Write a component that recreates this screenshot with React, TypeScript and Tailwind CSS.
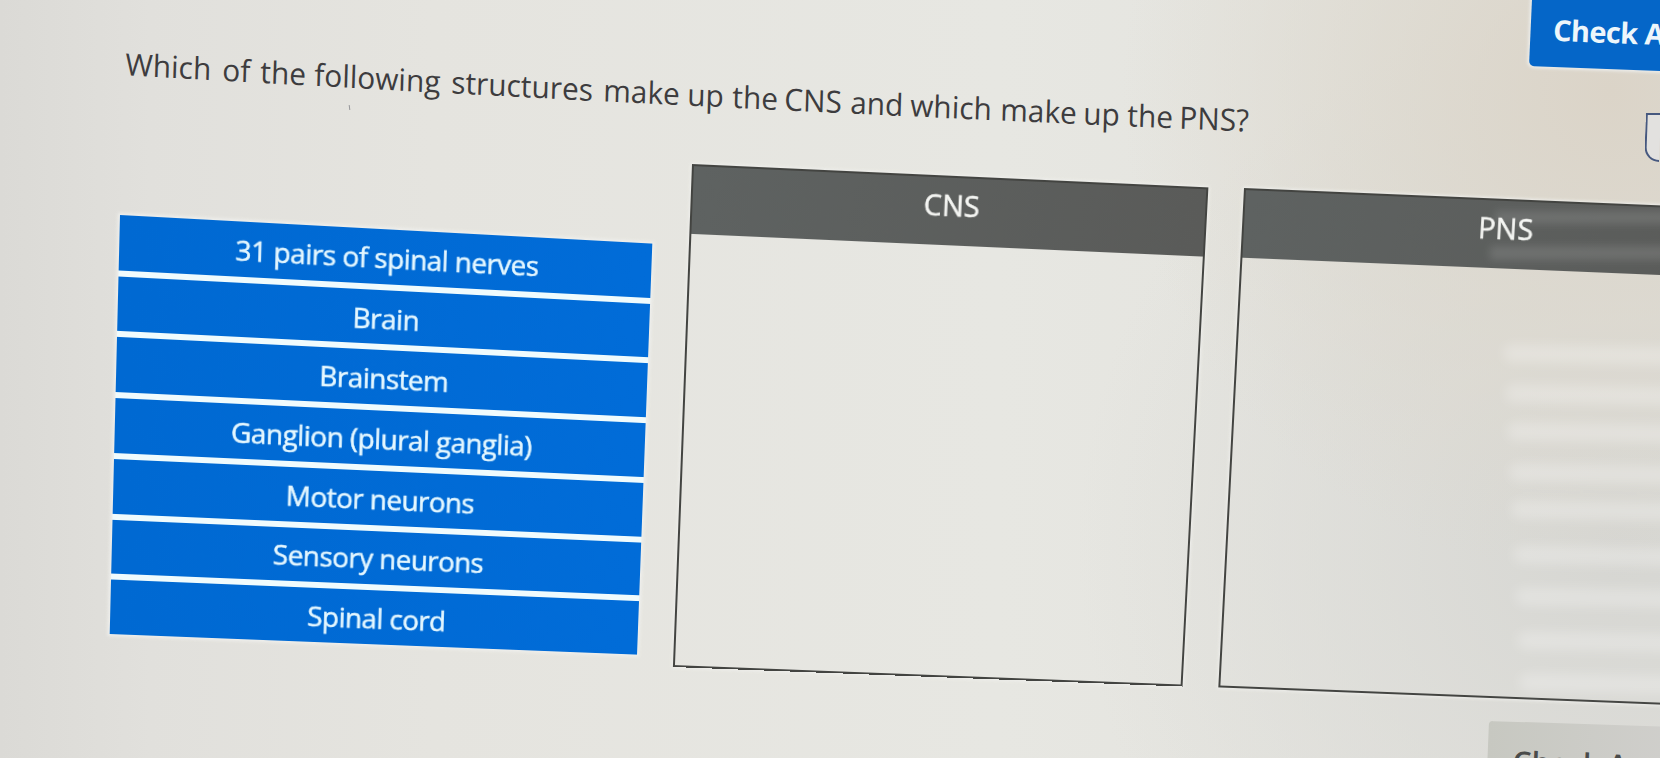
import type { CSSProperties } from 'react'

type Point = [number, number]

interface Tilt {
  width: number
  height: number
  // top right, bottom right and bottom left, measured from the top left corner
  corners: [Point, Point, Point]
}

function tiltStyle({ width, height, corners }: Tilt): CSSProperties {
  const [[x1, y1], [x2, y2], [x3, y3]] = corners
  const dx1 = x1 - x2
  const dx2 = x3 - x2
  const dy1 = y1 - y2
  const dy2 = y3 - y2
  const sx = x2 - x1 - x3
  const sy = y2 - y1 - y3
  const den = dx1 * dy2 - dx2 * dy1
  const g = (sx * dy2 - dx2 * sy) / den
  const h = (dx1 * sy - sx * dy1) / den
  const m = [
    (x1 + g * x1) / width, (y1 + g * y1) / width, 0, g / width,
    (x3 + h * x3) / height, (y3 + h * y3) / height, 0, h / height,
    0, 0, 1, 0,
    0, 0, 0, 1,
  ]
  return { width, height, transform: `matrix3d(${m.map((v) => v.toFixed(9)).join(',')})` }
}

const structures = [
  '31 pairs of spinal nerves',
  'Brain',
  'Brainstem',
  'Ganglion (plural ganglia)',
  'Motor neurons',
  'Sensory neurons',
  'Spinal cord',
]

// each word with the distance from the start of the line
const question: [string, number][] = [
  ['Which', -1],
  ['of', 96],
  ['the', 134],
  ['following', 188],
  ['structures', 325],
  ['make', 477],
  ['up', 561],
  ['the', 606],
  ['CNS', 658],
  ['and', 724],
  ['which', 784],
  ['make', 874],
  ['up', 957],
  ['the', 1001],
  ['PNS?', 1053],
  ['', 1130],
]

const listTilt: Tilt = { width: 532, height: 419, corners: [[532.3, 28.6], [517, 439.6], [-10.3, 419]] }
const cnsTilt: Tilt = { width: 516, height: 503, corners: [[516.4, 23.4], [490.5, 522.5], [-19.1, 503]] }
const pnsTilt: Tilt = { width: 522, height: 499, corners: [[522, 21.8], [491.3, 519.5], [-25.7, 499.4]] }

function Question() {
  return (
    <h1 className="flex w-[1131px] text-[30.5px] leading-[40px] text-[#3d3c3e]">
      {question.slice(0, -1).map(([word, start], i) => {
        const drop = 1.2 + 0.0575 * start - 0.0000065 * start * start
        const slope = 0.0575 - 0.000013 * start
        return (
          <span
            key={start}
            className="block shrink-0 origin-[0_32px] whitespace-nowrap"
            style={{
              width: question[i + 1][1] - start,
              transform: `matrix(0.978, ${slope}, -0.03, 1, 0, ${drop})`,
            }}
          >
            {word}
          </span>
        )
      })}
    </h1>
  )
}

function StructureList() {
  return (
    <ul
      className="mt-[51px] flex shrink-0 origin-top-left flex-col gap-[6px] bg-[#f0fbfd] text-[28px] font-medium tracking-[-0.55px] text-[#e4f7ff] shadow-[0_0_3px_2px_#efefec] [-webkit-text-stroke:0.5px_#e4f7ff]"
      style={tiltStyle(listTilt)}
    >
      {structures.map((name) => (
        <li
          key={name}
          className="flex flex-1 items-center justify-center bg-linear-to-r from-[#0069d2] to-[#016cd8] pt-px leading-none"
        >
          {name}
        </li>
      ))}
    </ul>
  )
}

interface DropZoneProps {
  title: string
  tilt: Tilt
  className: string
}

function DropZone({ title, tilt, className }: DropZoneProps) {
  return (
    <section
      className={`flex shrink-0 origin-top-left flex-col border-2 border-[#434441] shadow-[0_0_3px_1px_#efefec] ${className}`}
      style={tiltStyle(tilt)}
    >
      <h2 className="flex h-[67px] items-center justify-center bg-linear-to-r from-[#5e6261] to-[#5a5b59] pb-[14px] pl-[4px] text-[29px] leading-none font-medium text-[#f4f5f2] [-webkit-text-stroke:0.5px_#f4f5f2]">
        {title}
      </h2>
    </section>
  )
}

const glareBands = [355, 395, 433, 474, 511, 556, 598, 642, 684]

function Glare() {
  return (
    <div className="pointer-events-none absolute inset-0 overflow-hidden">
      {glareBands.map((top, i) => (
        <div
          key={top}
          className="absolute h-[18px] w-[200px] rotate-1 rounded-full bg-white/25 blur-[6px]"
          style={{ top: top - 9, left: 1503 + i * 2 }}
        />
      ))}
      <div className="absolute top-[211px] left-[1495px] h-[13px] w-[200px] bg-white/12 blur-[4px]" />
      <div className="absolute top-[246px] left-[1490px] h-[14px] w-[200px] bg-white/12 blur-[4px]" />
      <div className="absolute top-[105px] left-[349px] h-[5px] w-px rotate-[-8deg] bg-[#96979a]" />
    </div>
  )
}

export default function App() {
  return (
    <main className="relative h-[758px] w-[1660px] overflow-hidden bg-[#e6e5e0] bg-[radial-gradient(circle_at_97%_12%,#dbd4c8_0,#dcd7ccb0_12%,transparent_28%),radial-gradient(circle_at_98%_72%,#d6d6d2_0,#dadad6b0_14%,transparent_32%),linear-gradient(90deg,#dbdad6_0,#e1e0dc_9%,#e5e4df_26%,#e7e7e2_60%,#e2e1dc_100%)] font-['Open_Sans','Noto_Sans',sans-serif]">
      <header className="flex h-[164px] items-start justify-between pl-[125px]">
        <div className="pt-[42px]">
          <Question />
        </div>
        <div className="flex w-[131px] flex-col items-end">
          <button className="mt-[-10px] flex h-[76px] w-[131px] shrink-0 origin-bottom-left [transform:matrix(1,0.038,-0.045,1,0,0)] items-start rounded-bl-[5px] bg-[#0566c8] pt-[19px] pl-[22.5px] text-[29px] leading-[40px] font-bold tracking-[-0.6px] whitespace-nowrap text-[#edf6fb] shadow-[0_0_3px_2px_#ebebe8]">
            Check A
          </button>
          <div className="mt-[47px] h-[49px] w-[15px] shrink-0 skew-x-[-2deg] rounded-bl-[18px] border-2 border-r-0 border-[#46587f] bg-[#e2e1df]" />
        </div>
      </header>
      <div className="flex h-[557px] items-start pl-[120px]">
        <StructureList />
        <DropZone title="CNS" tilt={cnsTilt} className="ml-[40px]" />
        <DropZone title="PNS" tilt={pnsTilt} className="mt-[24px] ml-[36px]" />
      </div>
      <footer className="flex pl-[1489px]">
        <button className="h-[60px] w-[190px] shrink-0 origin-top-left [transform:matrix(1,0.032,-0.04,1,0,0)] rounded-[4px] bg-linear-to-r from-[#c7c8c1] to-[#d0cfcc] pt-[19px] pl-[25px] text-left text-[30px] leading-[40px] font-semibold whitespace-nowrap text-[#4a4b4a]">
          Check A
        </button>
      </footer>
      <Glare />
    </main>
  )
}
